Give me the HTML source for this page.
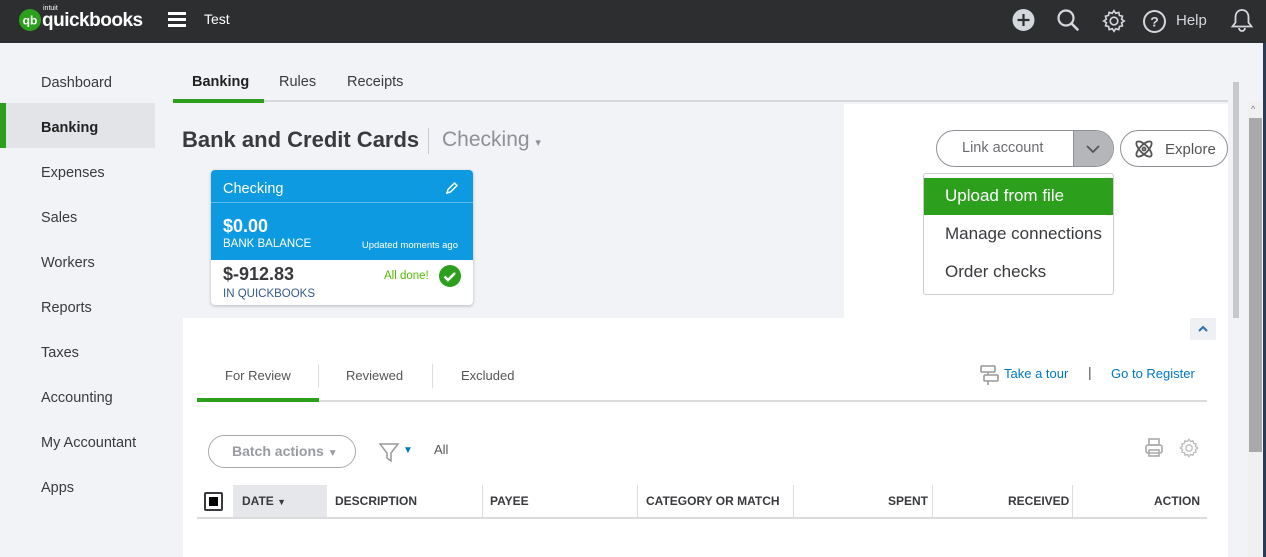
<!DOCTYPE html>
<html><head><meta charset="utf-8"><style>
*{box-sizing:border-box;margin:0;padding:0}
body{width:1266px;height:557px;overflow:hidden;background:#f2f3f7;font-family:"Liberation Sans",sans-serif;position:relative;color:#393a3d}
.a{position:absolute}
.top{left:0;top:0;width:1266px;height:43px;background:#2d2e30}
.nav div{position:absolute;left:41px;font-size:14.5px;color:#393a3d}
.tab{font-size:14.5px;color:#393a3d}
.th{font-size:12px;font-weight:bold;color:#393a3d;top:494px}
.sep{width:1px;background:#ddd}
</style></head><body>
<div class="a top"></div>
<svg class="a" style="left:19px;top:9px" width="22" height="22"><circle cx="11" cy="11" r="11" fill="#2ca01c"/><text x="11" y="15.5" font-size="12" font-weight="bold" fill="#fff" text-anchor="middle" font-family="Liberation Sans">qb</text></svg>
<div class="a" style="left:43px;top:5px;font-size:7px;color:#fff">intuit</div>
<div class="a" style="left:42px;top:10px;font-size:19px;font-weight:bold;color:#fff;letter-spacing:-0.5px">quickbooks</div>
<div class="a" style="left:168px;top:12px;width:18px;height:3px;background:#fff;box-shadow:0 6px 0 #fff,0 12px 0 #fff"></div>
<div class="a" style="left:204px;top:11px;font-size:14px;color:#fff">Test</div>
<svg class="a" style="left:1011px;top:8px" width="26" height="26"><circle cx="12.5" cy="12" r="11" fill="#d4d7dc"/><path d="M12.5 6v12M6.5 12h12" stroke="#2d2e30" stroke-width="2.2"/></svg>
<svg class="a" style="left:1056px;top:8px" width="26" height="26"><circle cx="10" cy="10" r="7.5" fill="none" stroke="#d4d7dc" stroke-width="2.2"/><path d="M15.5 15.5l6 6" stroke="#d4d7dc" stroke-width="2.6" stroke-linecap="round"/></svg>
<svg class="a" style="left:1101px;top:8px" width="26" height="26" viewBox="0 0 24 24"><path d="M12 2.5l1.6 2.4 2.8-.8.6 2.8 2.8.7-.8 2.8 2.4 1.6-2.4 1.6.8 2.8-2.8.7-.6 2.8-2.8-.8L12 21.5l-1.6-2.4-2.8.8-.6-2.8-2.8-.7.8-2.8L2.5 12l2.4-1.6-.8-2.8 2.8-.7.6-2.8 2.8.8z" fill="none" stroke="#d4d7dc" stroke-width="1.5"/><circle cx="12" cy="12" r="3.5" fill="none" stroke="#d4d7dc" stroke-width="1.5"/></svg>
<svg class="a" style="left:1142px;top:9px" width="26" height="26"><circle cx="12.5" cy="12.5" r="10.5" fill="none" stroke="#d4d7dc" stroke-width="2"/><text x="12.5" y="17.5" font-size="14" font-weight="bold" fill="#d4d7dc" text-anchor="middle" font-family="Liberation Sans">?</text></svg>
<div class="a" style="left:1176px;top:12px;font-size:15px;color:#d4d7dc">Help</div>
<svg class="a" style="left:1229px;top:7px" width="26" height="28"><path d="M13 3c-4.5 0-6.5 3.5-6.5 7.5v5l-3 4h19l-3-4v-5C19.5 6.5 17.5 3 13 3z" fill="none" stroke="#d4d7dc" stroke-width="1.8"/><path d="M10 21a3 3 0 0 0 6 0" fill="none" stroke="#d4d7dc" stroke-width="1.8"/></svg>

<div class="a" style="left:6px;top:103px;width:149px;height:45px;background:#e3e4e8"></div>
<div class="a" style="left:0;top:103px;width:6px;height:45px;background:#2ca01c"></div>
<div class="nav">
<div style="top:75px">Dashboard</div>
<div style="top:120px;font-weight:bold;color:#222">Banking</div>
<div style="top:165px">Expenses</div>
<div style="top:210px">Sales</div>
<div style="top:255px">Workers</div>
<div style="top:300px">Reports</div>
<div style="top:345px">Taxes</div>
<div style="top:390px">Accounting</div>
<div style="top:435px">My Accountant</div>
<div style="top:480px">Apps</div>
</div>

<div class="a" style="left:173px;top:100px;width:1055px;height:2px;background:#d7d8dc"></div>
<div class="a" style="left:173px;top:99px;width:91px;height:4px;background:#2ca01c"></div>
<div class="a tab" style="left:192px;top:74px;font-weight:bold;color:#222">Banking</div>
<div class="a tab" style="left:279px;top:74px">Rules</div>
<div class="a tab" style="left:347px;top:74px">Receipts</div>

<div class="a" style="left:844px;top:104px;width:384px;height:214px;background:#fff"></div>
<div class="a" style="left:182px;top:127px;font-size:22px;font-weight:bold;color:#393a3d">Bank and Credit Cards</div>
<div class="a" style="left:428px;top:128px;width:1px;height:26px;background:#ccc"></div>
<div class="a" style="left:442px;top:128px;font-size:21px;color:#8d9096">Checking <span style="font-size:11px">▾</span></div>

<div class="a" style="left:211px;top:170px;width:262px;height:135px;border-radius:4px;background:#fff;box-shadow:0 1px 3px rgba(0,0,0,.25);overflow:hidden">
<div style="height:90px;background:#0d9ae0;color:#fff;position:relative">
<div style="position:absolute;left:12px;top:11px;font-size:14.5px">Checking</div>
<svg style="position:absolute;left:234px;top:11px" width="14" height="14"><path d="M2 12l1-3.5 6.5-6.5 2.5 2.5L5.5 11z" fill="none" stroke="#fff" stroke-width="1.5"/></svg>
<div style="position:absolute;left:0;top:32px;width:262px;height:1px;background:#5cbcec"></div>
<div style="position:absolute;left:12px;top:46px;font-size:18px;font-weight:bold">$0.00</div>
<div style="position:absolute;left:12px;top:68px;font-size:11.5px">BANK BALANCE</div>
<div style="position:absolute;right:15px;top:70px;font-size:9.5px">Updated moments ago</div>
</div>
<div style="position:absolute;left:12px;top:94px;font-size:18px;font-weight:bold;color:#393a3d">$-912.83</div>
<div style="position:absolute;left:12px;top:118px;font-size:11.5px;color:#365b8c">IN QUICKBOOKS</div>
<div style="position:absolute;left:173px;top:100px;font-size:11.5px;color:#53b700">All done!</div>
<svg style="position:absolute;left:227px;top:94px" width="24" height="24"><circle cx="12" cy="12" r="11" fill="#2ca01c"/><path d="M6.5 12.5l3.5 3.5 7-7" fill="none" stroke="#fff" stroke-width="2.6"/></svg>
</div>

<div class="a" style="left:936px;top:130px;width:178px;height:37px;border:1px solid #8d9096;border-radius:19px;background:#fff;overflow:hidden">
<div style="position:absolute;left:25px;top:9px;font-size:14.5px;color:#6b6c72">Link account</div>
<div style="position:absolute;left:136px;top:0;width:42px;height:37px;background:#b5b6b9;border-left:1px solid #8d9096"></div>
<svg style="position:absolute;left:148px;top:12px" width="16" height="12"><path d="M2 3l6 6 6-6" fill="none" stroke="#555" stroke-width="1.8"/></svg>
</div>
<div class="a" style="left:1120px;top:130px;width:108px;height:37px;border:1px solid #8d9096;border-radius:19px;background:#fff">
<svg style="position:absolute;left:11px;top:6px" width="24" height="24" viewBox="0 0 24 24"><g fill="none" stroke="#555" stroke-width="1.8"><ellipse cx="12" cy="12" rx="10" ry="4" transform="rotate(45 12 12)"/><ellipse cx="12" cy="12" rx="10" ry="4" transform="rotate(-45 12 12)"/><circle cx="12" cy="12" r="1.5"/></g></svg>
<div style="position:absolute;left:44px;top:10px;font-size:15px;color:#555">Explore</div>
</div>
<div class="a" style="left:923px;top:173px;width:191px;height:122px;background:#fff;border:1px solid #ccc;border-radius:3px"></div>
<div class="a" style="left:924px;top:178px;width:189px;height:37px;background:#2ca01c"></div>
<div class="a" style="left:945px;top:186px;font-size:17px;color:#fff">Upload from file</div>
<div class="a" style="left:945px;top:224px;font-size:17px;color:#393a3d">Manage connections</div>
<div class="a" style="left:945px;top:262px;font-size:17px;color:#393a3d">Order checks</div>

<div class="a" style="left:1233px;top:82px;width:6px;height:236px;background:#c8c9cc"></div>
<div class="a" style="left:1248px;top:102px;width:14px;height:455px;background:#f0f0f0"></div>
<div class="a" style="left:1249px;top:118px;width:13px;height:334px;background:#a9a9a9"></div>
<div class="a" style="left:1251px;top:104px;font-size:9px;color:#777">^</div>
<div class="a" style="left:1263px;top:43px;width:3px;height:514px;background:#2b3a55"></div>

<div class="a" style="left:183px;top:318px;width:1045px;height:239px;background:#fff"></div>
<div class="a" style="left:1190px;top:318px;width:26px;height:22px;background:#eef0f4"></div>
<svg class="a" style="left:1197px;top:324px" width="12" height="10"><path d="M2 7l4-4 4 4" fill="none" stroke="#2b6fb6" stroke-width="2"/></svg>

<div class="a" style="left:197px;top:400px;width:1010px;height:2px;background:#dcdcdc"></div>
<div class="a" style="left:197px;top:398px;width:122px;height:4px;background:#2ca01c"></div>
<div class="a" style="left:225px;top:368px;font-size:13px;color:#555">For Review</div>
<div class="a sep" style="left:318px;top:364px;height:24px"></div>
<div class="a" style="left:346px;top:368px;font-size:13px;color:#555">Reviewed</div>
<div class="a sep" style="left:432px;top:364px;height:24px"></div>
<div class="a" style="left:461px;top:368px;font-size:13px;color:#555">Excluded</div>
<svg class="a" style="left:979px;top:364px" width="22" height="22"><g fill="none" stroke="#999" stroke-width="1.6"><rect x="2" y="2" width="14" height="6" rx="1"/><rect x="5" y="11" width="14" height="6" rx="1"/><path d="M9 8v3M9 17v4"/></g></svg>
<div class="a" style="left:1004px;top:366px;font-size:13px;color:#0077c5">Take a tour</div>
<div class="a" style="left:1088px;top:364px;font-size:14px;color:#555">|</div>
<div class="a" style="left:1111px;top:366px;font-size:13px;color:#0077c5">Go to Register</div>

<div class="a" style="left:208px;top:435px;width:148px;height:33px;border:1.5px solid #aaa;border-radius:17px"></div>
<div class="a" style="left:232px;top:443px;font-size:14px;font-weight:bold;color:#9a9ba0">Batch actions <span style="font-size:10px">▼</span></div>
<svg class="a" style="left:378px;top:441px" width="22" height="22"><path d="M2 3h18l-7 9v8l-4-3v-5z" fill="none" stroke="#999" stroke-width="1.5"/></svg>
<div class="a" style="left:403px;top:445px;font-size:10px;color:#0077c5">▼</div>
<div class="a" style="left:434px;top:442px;font-size:13px;color:#555">All</div>
<svg class="a" style="left:1143px;top:437px" width="22" height="22"><g fill="none" stroke="#aaa" stroke-width="1.6"><rect x="6" y="2" width="10" height="6"/><rect x="3" y="8" width="16" height="8" rx="2"/><rect x="6" y="13" width="10" height="6"/></g></svg>
<svg class="a" style="left:1178px;top:437px" width="22" height="22" viewBox="0 0 24 24"><path d="M12 2.5l1.6 2.4 2.8-.8.6 2.8 2.8.7-.8 2.8 2.4 1.6-2.4 1.6.8 2.8-2.8.7-.6 2.8-2.8-.8L12 21.5l-1.6-2.4-2.8.8-.6-2.8-2.8-.7.8-2.8L2.5 12l2.4-1.6-.8-2.8 2.8-.7.6-2.8 2.8.8z" fill="none" stroke="#bbb" stroke-width="1.4"/><circle cx="12" cy="12" r="3.5" fill="none" stroke="#bbb" stroke-width="1.4"/></svg>

<div class="a" style="left:233px;top:485px;width:94px;height:32px;background:#e6e7eb"></div>
<div class="a" style="left:197px;top:517px;width:1010px;height:2px;background:#dcdcdc"></div>
<div class="a" style="left:204px;top:492px;width:19px;height:19px;border:2px solid #393a3d;border-radius:2px"></div>
<div class="a" style="left:209px;top:497px;width:9px;height:9px;background:#000"></div>
<div class="a th" style="left:242px">DATE <span style="font-size:9px">▼</span></div>
<div class="a th" style="left:335px">DESCRIPTION</div>
<div class="a sep" style="left:482px;top:485px;height:32px"></div>
<div class="a th" style="left:490px">PAYEE</div>
<div class="a sep" style="left:637px;top:485px;height:32px"></div>
<div class="a th" style="left:646px">CATEGORY OR MATCH</div>
<div class="a sep" style="left:793px;top:485px;height:32px"></div>
<div class="a th" style="left:888px">SPENT</div>
<div class="a sep" style="left:932px;top:485px;height:32px"></div>
<div class="a th" style="left:1008px">RECEIVED</div>
<div class="a sep" style="left:1072px;top:485px;height:32px"></div>
<div class="a th" style="left:1154px">ACTION</div>
</body></html>
